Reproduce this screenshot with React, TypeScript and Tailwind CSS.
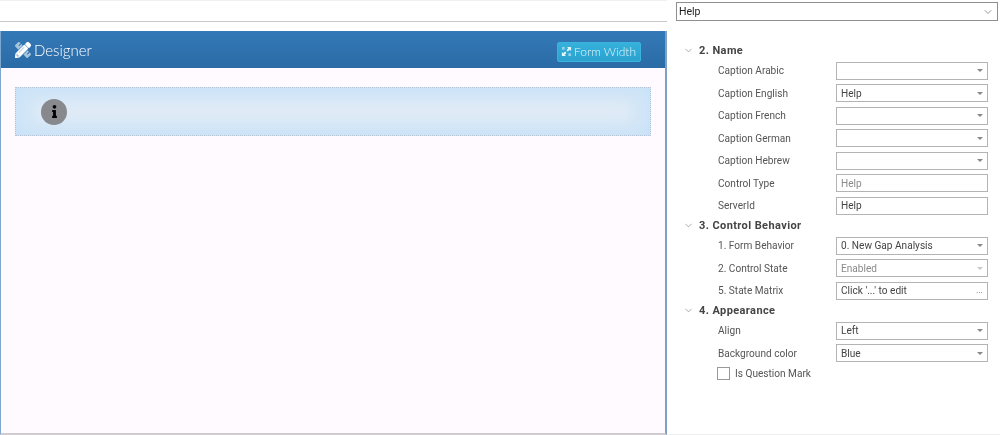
import { FaInfo, FaPencilRuler, FaPencilAlt } from "react-icons/fa";
import { ChevronDown } from "lucide-react";

function Caret(props: { light?: boolean }) {
  return (
    <span
      className={`w-0 h-0 border-x-[3px] border-x-transparent border-t-[3px] ${
        props.light ? "border-t-[#c8c8c8]" : "border-t-[#888888]"
      }`}
    />
  );
}

function Field(props: {
  label: string;
  value?: string;
  kind?: "select" | "text" | "dots";
  disabled?: boolean;
}) {
  const kind = props.kind ?? "select";
  return (
    <div className="flex items-center h-[22.5px] pl-[51px]">
      <span className="w-[118px] text-[#555] text-[10.1px]">{props.label}</span>
      <div className="flex items-center justify-between w-[152px] h-[18px] bg-white border border-[#b4b4b4] pl-[4px] pr-[4px]">
        <span
          className={`text-[10.1px] ${
            props.disabled || props.label === "Control Type"
              ? "text-[#8a8a8a]"
              : "text-[#444]"
          }`}
        >
          {props.value}
        </span>
        {kind === "select" && <Caret light={props.disabled} />}
        {kind === "dots" && (
          <span className="text-[9px] leading-none text-[#666]">...</span>
        )}
      </div>
    </div>
  );
}

function Section(props: { title: string; children: React.ReactNode }) {
  return (
    <div>
      <div className="flex items-center h-[17.5px] pl-[16px] gap-[5px]">
        <ChevronDown className="w-[11px] h-[11px] text-[#888]" strokeWidth={1.5} />
        <span className="text-[11px] font-bold text-[#444] tracking-[0.4px]">
          {props.title}
        </span>
      </div>
      {props.children}
    </div>
  );
}

export default function App() {
  return (
    <div className="flex w-[1000px] h-[435px] bg-white overflow-hidden font-['Roboto',sans-serif] blur-[0.4px]">
      <div className="flex flex-col w-[667px] shrink-0">
        <div className="h-[22px] shrink-0 border-t border-t-[#f0f0f0] border-b border-b-[#c8c8c8]" />
        <div className="h-[9px] shrink-0" />
        <div className="flex flex-col flex-1 border-l border-r-2 border-b-2 border-l-[#7fa8d0] border-r-[#7f9fc4] border-b-[#cfcbcf]">
          <div className="flex items-center justify-between h-[37px] shrink-0 pl-[14px] pr-[24px] bg-gradient-to-b from-[#3479b8] to-[#2a6ba5]">
            <div className="flex items-center gap-[3px] mt-[1px] text-white">
              <span className="relative w-[16px] h-[16px]">
                <FaPencilRuler className="w-[16px] h-[16px] text-[#a5c4de]" />
                <FaPencilAlt className="absolute inset-0 w-[16px] h-[16px] text-white" />
              </span>
              <span className="font-['Lato',sans-serif] font-light text-[15px]">
                Designer
              </span>
            </div>
            <div className="flex items-center gap-[2px] mt-[4px] h-[20px] pl-[3px] pr-[4px] rounded-[2px] border border-[#3ab4dc] bg-gradient-to-b from-[#35b1db] to-[#2ba2d0] text-[#e4f5fb]">
              <svg viewBox="0 0 12 12" className="w-[11px] h-[11px]" fill="currentColor">
                <path d="M6.500 1H11v4.500L9.500 4 7.500 6 6 4.500 8 2.500z" />
                <path d="M5.500 11H1V6.500L2.500 8l2-2L6 7.500l-2 2z" />
                <rect x="1" y="1" width="3" height="3" opacity="0.55" />
                <rect x="8" y="8" width="3" height="3" opacity="0.55" />
              </svg>
              <span className="font-['Lato',sans-serif] font-light text-[12px]">
                Form Width
              </span>
            </div>
          </div>
          <div className="flex-1 bg-[#fefaff] pt-[19px] px-[14px]">
            <div className="relative flex items-center w-[636px] h-[49px] pl-[25px] border border-dotted border-[#b5c4d4] overflow-hidden bg-[#d4e7f7] shadow-[inset_0_0_18px_#c5e0f8]">
              <div className="absolute inset-x-[18px] inset-y-[13px] rounded-full bg-[#deeaf6] blur-[5px]" />
              <div className="relative flex items-center justify-center w-[26px] h-[26px] rounded-full bg-[#88898d]">
                <FaInfo className="w-[13px] h-[13px] text-black" />
              </div>
            </div>
          </div>
        </div>
      </div>
      <div className="flex-1 flex flex-col border-b border-b-[#eeeeee]">
        <div className="flex items-center justify-between mt-[2px] ml-[9px] mr-[2px] h-[19px] border border-[#8f8f8f] pl-[2px] pr-[3px]">
          <span className="text-[10.5px] text-[#222]">Help</span>
          <ChevronDown className="w-[12px] h-[12px] text-[#777]" strokeWidth={1.5} />
        </div>
        <div className="mt-[21px]">
          <Section title="2. Name">
            <Field label="Caption Arabic" />
            <Field label="Caption English" value="Help" />
            <Field label="Caption French" />
            <Field label="Caption German" />
            <Field label="Caption Hebrew" />
            <Field label="Control Type" value="Help" kind="text" />
            <Field label="ServerId" value="Help" kind="text" />
          </Section>
          <Section title="3. Control Behavior">
            <Field label="1. Form Behavior" value="0. New Gap Analysis" />
            <Field label="2. Control State" value="Enabled" disabled />
            <Field label="5. State Matrix" value="Click '...' to edit" kind="dots" />
          </Section>
          <Section title="4. Appearance">
            <Field label="Align" value="Left" />
            <Field label="Background color" value="Blue" />
            <div className="flex items-center h-[18px] pl-[50px] gap-[5px]">
              <span className="w-[13px] h-[13px] border border-[#999] bg-white" />
              <span className="text-[10.1px] text-[#555]">Is Question Mark</span>
            </div>
          </Section>
        </div>
      </div>
    </div>
  );
}
